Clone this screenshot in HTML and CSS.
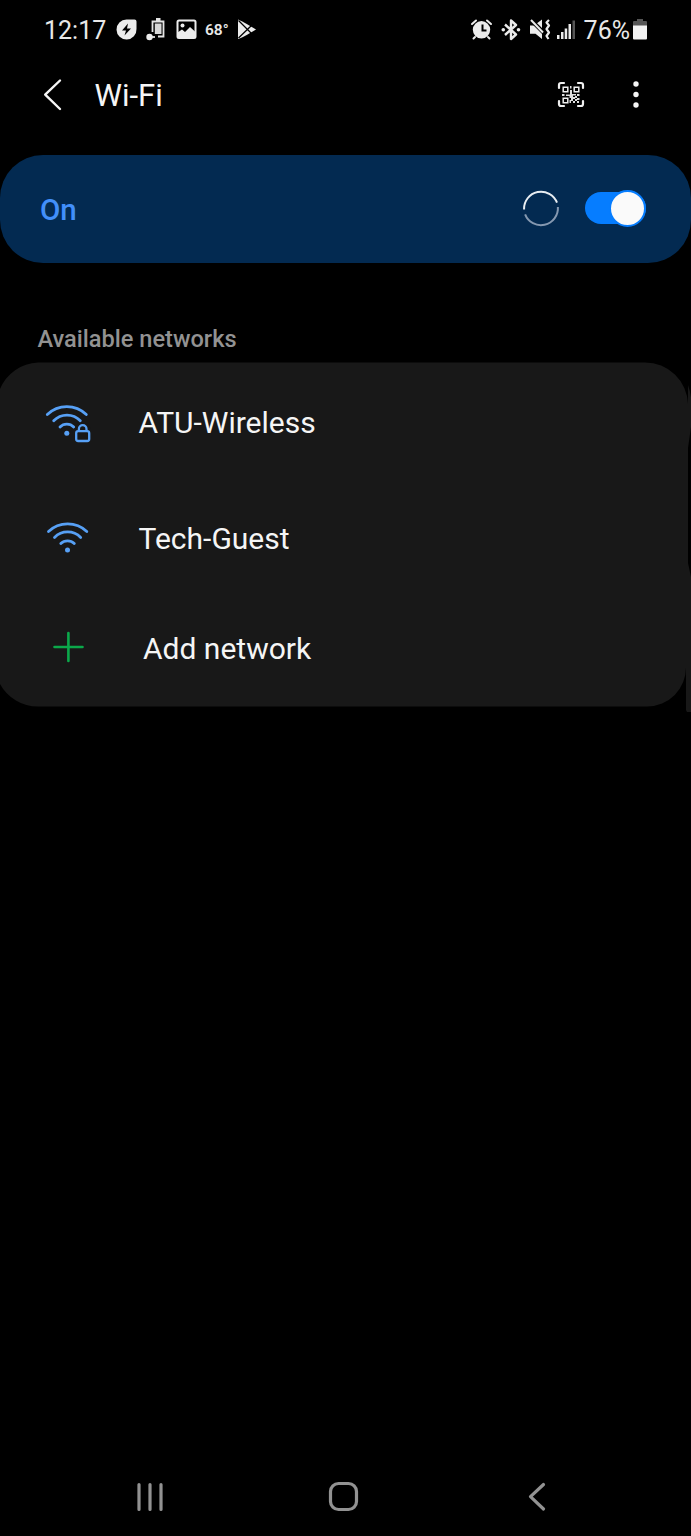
FILE: index.html
```html
<!DOCTYPE html>
<html lang="en">
<head>
<meta charset="utf-8">
<title>Wi-Fi</title>
<link rel="stylesheet" href="styles.css">
</head>
<body>
<div class="phone">
  <header class="status">
    <span class="clock">12:17</span>
    <svg class="status-left" viewBox="0 0 84 30" width="84" height="30">
      <path fill="#ececec" d="M11.500 4.500H19.500Q21.500 4.500 21.500 6.500V14A10 10 0 1 1 11.500 4.500Z"/>
      <path fill="#000" d="M13 8.500 7 15.500H11L9.500 20.500 16 13.500H12Z"/>
      <g fill="none" stroke="#e4e4e4" stroke-width="1.800">
        <path d="M37.500 17V6.500H48.500V21.500H43"/>
        <path d="M41 4.500H45.500" stroke-width="3"/>
        <path d="M33 22H40"/>
      </g>
      <path fill="#d8d8d8" d="M39.800 8.500H46.500V19H39.800Z"/>
      <circle cx="34.500" cy="22" r="3.200" fill="#ececec"/>
      <rect x="62.500" y="5.500" width="18" height="17.500" rx="1.500" fill="none" stroke="#ececec" stroke-width="2"/>
      <path fill="#ececec" d="M62.500 22.500V17.500L67 14.500 70 17 75 12 80.500 17V22.500Z"/>
      <circle cx="67.500" cy="10.500" r="2" fill="#ececec"/>
    </svg>
    <span class="temp">68°</span>
    <svg class="play" viewBox="0 0 20 22" width="20" height="22">
      <path fill="#ececec" d="M1 .5Q3 1 14 7.500L19 10.500 14 13.500Q3 20 1 20Z"/>
      <path stroke="#000" stroke-width="1.300" fill="none" d="M1.500 1.500 14.500 14.500M1.500 19 14.500 6.500"/>
    </svg>
    <svg class="status-right" viewBox="0 0 108 30" width="108" height="30">
      <g stroke="#ececec" fill="none" stroke-width="2" stroke-linecap="round">
        <path d="M2 9 6 5.500M17 5.500 21 9M5 22 3.500 23.500M18 22 19.500 23.500"/>
        <circle cx="11.500" cy="14.800" r="8.700" fill="#ececec" stroke="none"/>
        <path stroke="#000" stroke-linecap="butt" d="M12.500 9.500V15.500H16.500"/>
        <path stroke-width="2.400" stroke-linejoin="round" stroke-linecap="butt" d="M35 9.500 46 19.500 41 24V5.500L46 10 35 20"/>
      </g>
      <circle cx="33.300" cy="14.700" r="1.800" fill="#ececec"/><circle cx="48.500" cy="14.700" r="1.800" fill="#ececec"/>
      <path fill="#ececec" d="M60 10.500H64L72 4.500V24L65.500 18.800H60Z"/>
      <path stroke="#000" stroke-width="4" d="M60 4 75 19"/>
      <path stroke="#ececec" stroke-width="2" d="M61 5 73 17.500"/>
      <path fill="none" stroke="#ececec" stroke-width="2.200" stroke-linejoin="round" d="M79 5 76.500 7.500 79 10.500 76.500 14 79 17.500 76.500 21 78.500 24"/>
      <path fill="#ececec" d="M87 20H89.500V24H87ZM91 17H93.500V24H91ZM94.700 13.500H97.200V24H94.700ZM98.500 9H101V24H98.500Z"/>
      <path fill="#555" d="M102.500 5.500H105V24H102.500Z"/>
    </svg>
    <span class="percent">76%</span>
    <svg class="battery" viewBox="0 0 14 22" width="14" height="22">
      <path fill="#555" d="M4 0H10V2H13Q14 2 14 3V8H0V3Q0 2 1 2H4Z"/>
      <path fill="#f2f2f2" d="M0 6.500H14V19.500Q14 20.500 13 20.500H1Q0 20.500 0 19.500Z"/>
    </svg>
  </header>

  <nav class="toolbar">
    <svg class="back" viewBox="0 0 22 34" width="22" height="34"><path d="M18 2.500 3.200 16.700 18 31"/></svg>
    <h1 class="title">Wi-Fi</h1>
    <svg class="qr" viewBox="0 0 28 28" width="28" height="28">
      <g fill="none" stroke="#efefef">
        <path stroke-width="2.200" stroke-linecap="round" stroke-linejoin="round" d="M2 7V4Q2 2 4 2H7M21 2H24Q26 2 26 4V7M26 20V23Q26 25 24 25H21M7 25H4Q2 25 2 23V20"/>
        <path stroke-width="1.500" d="M6.200 6.200H10.800V10.800H6.200ZM17.200 6.200H21.800V10.800H17.200ZM6.200 17.200H10.800V21.800H6.200Z"/>
      </g>
      <path fill="#dedede" d="M13 5H14.500V7.500H13ZM13 9H15V13H19V14.500H16V16H18V18H16V20H14V22H12.500V19H14V17H12.500V15H9V13.500H13ZM5 13H7.500V15H5ZM20 13H22.500V15H20ZM18 15H20V17H18ZM20 17H22.500V19H20ZM18 18H20V20H18ZM20 20H22V22H20ZM16 20H18V22H16Z"/>
    </svg>
    <svg class="more" viewBox="0 0 8 28" width="8" height="28"><circle cx="4" cy="3" r="2.700"/><circle cx="4" cy="13.500" r="2.700"/><circle cx="4" cy="24" r="2.700"/></svg>
  </nav>

  <section class="switch-bar">
    <span class="on">On</span>
    <svg class="spinner" viewBox="0 0 38 38" width="38" height="38">
      <path stroke="#e8edf2" d="M2.100 19.500A17 17 0 0 1 35 12.700"/>
      <path stroke="#8598b0" d="M35.900 17A17 17 0 0 1 3.100 24.300"/>
    </svg>
    <span class="toggle"><span class="knob"></span></span>
  </section>

  <h2 class="section-title">Available networks</h2>
  <main class="networks">
    <svg class="card-shape" viewBox="0 0 691 350" width="691" height="350" aria-hidden="true">
      <path d="M0 27A43 43 0 0 1 38 .5H645A43 43 0 0 1 688 42V23Q694 40 691 65L688 86V201L691 215V350H687L686 348V305A39 39 0 0 1 647 344.500H38A43 43 0 0 1 0 322Z"/>
    </svg>
    <div class="row row-locked">
      <svg class="icon" viewBox="0 0 48 42" width="48" height="42">
        <g class="waves"><path d="M3.300 12.500A28 28 0 0 1 42.300 12.500"/><path d="M9.700 18.700A18.500 18.500 0 0 1 36.300 18.700"/><path d="M16 25A9.500 9.500 0 0 1 29.700 25"/></g>
        <circle cx="22.800" cy="31.200" r="2.500" fill="#57a0f5"/>
        <path class="lock-gap" d="M30.500 40V27L34 21H43L47 27V40Z"/>
        <g class="lock"><rect x="32.200" y="29.200" width="13" height="9.800" rx="2"/><path d="M34.900 29V27A3.800 3.800 0 0 1 42.500 27V29"/></g>
      </svg>
      <span class="name">ATU-Wireless</span>
    </div>
    <div class="row row-open">
      <svg class="icon" viewBox="0 0 48 42" width="48" height="42">
        <g class="waves"><path d="M4.500 13.500A28 28 0 0 1 42.800 13.500"/><path d="M10.500 19.400A18.500 18.500 0 0 1 36.700 19.400"/><path d="M16.800 25.600A9.500 9.500 0 0 1 30.300 25.600"/></g>
        <circle cx="23.500" cy="32" r="2.500" fill="#57a0f5"/>
      </svg>
      <span class="name">Tech-Guest</span>
    </div>
    <div class="row row-add">
      <svg class="icon" viewBox="0 0 48 42" width="48" height="42"><path class="plus" d="M10.500 19H38.500M24.400 5V33"/></svg>
      <span class="name">Add network</span>
    </div>
  </main>

  <footer class="navbar">
    <svg viewBox="0 0 30 32" width="30" height="32"><path d="M4 3.500V28.500M15 3.500V28.500M26 3.500V28.500"/></svg>
    <svg class="home" viewBox="0 0 32 32" width="32" height="32"><rect x="2.500" y="2.500" width="26" height="26" rx="8"/></svg>
    <svg class="nav-back" viewBox="0 0 20 32" width="20" height="32"><path d="M16.500 3.500 3.500 15.700 16.500 28"/></svg>
  </footer>
</div>
</body>
</html>
```
FILE: styles.css
```css
* { box-sizing: border-box; }
body { margin: 0; background: #000; }
svg { display: block; flex: none; }
.phone {
  width: 691px;
  height: 1536px;
  display: flex;
  flex-direction: column;
  background: #000;
  color: #f5f5f5;
  font-family: Roboto, "Liberation Sans", sans-serif;
  overflow: hidden;
}
.status {
  height: 60px;
  display: flex;
  align-items: center;
  padding: 0 44px;
  white-space: nowrap;
  color: #e8e8e8;
}
.clock, .percent { margin-top: 2px; font-size: 25px; line-height: 30px; }
.clock { width: 71px; }
.temp { margin-left: 6px; width: 32px; font-size: 15.500px; font-weight: 600; line-height: 24px; }
.status-right { margin-left: auto; margin-right: 6px; }
.battery { margin-left: 3px; }
.toolbar {
  height: 70px;
  display: flex;
  align-items: center;
  padding: 0 51px 0 42px;
}
.back path { fill: none; stroke: #f5f5f5; stroke-width: 2.4; stroke-linecap: round; stroke-linejoin: round; }
.title { margin: 2px 0 0 30.500px; font-size: 31px; font-weight: 400; line-height: 36px; }
.qr { margin-left: auto; }
.more { margin-left: 47px; fill: #f5f5f5; }
.switch-bar {
  margin-top: 25px;
  height: 107.500px;
  border-radius: 43px;
  background: #032a51;
  display: flex;
  align-items: center;
  padding: 0 45px 0 40px;
  flex: none;
}
.on { margin-top: 2px; color: #428ffa; font-size: 29.500px; font-weight: 500; }
.spinner { margin-left: auto; fill: none; stroke-width: 2; }
.toggle {
  width: 61px;
  height: 32px;
  margin-left: 25.500px;
  margin-bottom: 1px;
  border-radius: 16px;
  background: #067dff;
  display: flex;
  align-items: center;
  justify-content: flex-end;
}
.knob { width: 37px; height: 37px; border: 2px solid #067dff; border-radius: 50%; background: #fafafa; flex: none; }
.section-title { margin: 62.500px 0 9px 37.500px; font-size: 23.600px; line-height: 28px; font-weight: 500; color: #929292; }
.networks { position: relative; height: 350px; padding-top: 2px; flex: none; }
.card-shape { position: absolute; left: 0; top: 0; fill: #181818; }
.row { position: relative; display: flex; align-items: center; padding-left: 44px; }
.row-locked { height: 118px; }
.row-open { height: 114px; }
.row-add { height: 106px; }
.name { margin-left: 46.500px; font-size: 30px; line-height: 36px; }
.row-add .name { margin-left: 51px; }
.waves { fill: none; stroke: #57a0f5; stroke-width: 2.8; stroke-linecap: round; }
.lock { fill: none; stroke: #57a0f5; stroke-width: 2.3; }
.lock-gap { fill: #181818; }
.plus { stroke: #0ba84a; stroke-width: 2.6; stroke-linecap: round; }
.navbar { margin-top: auto; height: 79px; display: flex; align-items: center; padding: 0 144px 0 135px; }
.navbar svg { fill: none; stroke: #929292; stroke-width: 3.2; stroke-linecap: round; stroke-linejoin: round; }
.home { margin-left: 162.500px; }
.nav-back { margin-left: auto; }
```
